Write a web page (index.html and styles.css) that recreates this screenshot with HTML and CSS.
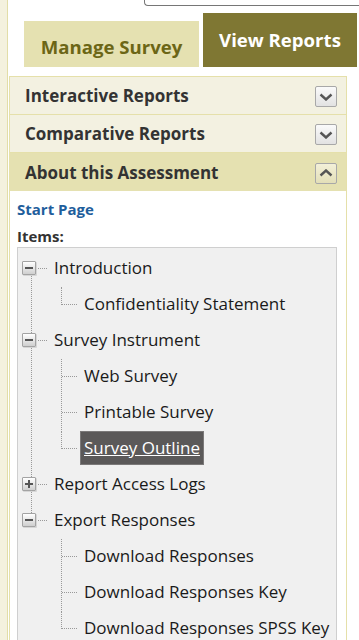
FILE: index.html
```html
<!DOCTYPE html>
<html lang="en">
<head>
    <meta charset="UTF-8">
    <meta name="viewport" content="width=device-width, initial-scale=1.0">
    <title>View Reports</title>
    <link rel="stylesheet" href="styles.css">
</head>
<body>
    <div class="page">
        <div class="edge"></div>
        <div class="main">
            <div class="search"></div>

            <div class="tabs">
                <a class="tab tab--manage">Manage Survey</a>
                <a class="tab tab--view">View Reports</a>
            </div>

            <section class="panel">
                <div class="panel__header">
                    <span>Interactive Reports</span>
                    <span class="chev">
                        <svg width="14" height="8" viewBox="0 0 14 8"><polyline points="1.5,1.5 7,6.5 12.5,1.5" fill="none" stroke="#555" stroke-width="2.4"/></svg>
                    </span>
                </div>
                <div class="panel__header">
                    <span>Comparative Reports</span>
                    <span class="chev">
                        <svg width="14" height="8" viewBox="0 0 14 8"><polyline points="1.5,1.5 7,6.5 12.5,1.5" fill="none" stroke="#555" stroke-width="2.4"/></svg>
                    </span>
                </div>
                <div class="panel__header panel__header--open">
                    <span>About this Assessment</span>
                    <span class="chev">
                        <svg width="14" height="8" viewBox="0 0 14 8"><polyline points="1.5,6.5 7,1.5 12.5,6.5" fill="none" stroke="#555" stroke-width="2.4"/></svg>
                    </span>
                </div>

                <div class="panel__body">
                    <a class="start-link">Start Page</a>
                    <div class="items-title">Items:</div>

                    <div class="tree-box">
                        <ul class="tree">
                            <li class="node">
                                <div class="row"><span class="toggle toggle--minus"></span><span class="hline"></span><span class="label">Introduction</span></div>
                                <ul class="sub">
                                    <li class="last"><div class="row"><span class="hline"></span><span class="label">Confidentiality Statement</span></div></li>
                                </ul>
                            </li>
                            <li class="node">
                                <div class="row"><span class="toggle toggle--minus"></span><span class="hline"></span><span class="label">Survey Instrument</span></div>
                                <ul class="sub">
                                    <li><div class="row"><span class="hline"></span><span class="label">Web Survey</span></div></li>
                                    <li><div class="row"><span class="hline"></span><span class="label">Printable Survey</span></div></li>
                                    <li class="last"><div class="row"><span class="hline"></span><span class="label label--selected">Survey Outline</span></div></li>
                                </ul>
                            </li>
                            <li class="node">
                                <div class="row"><span class="toggle toggle--plus"></span><span class="hline"></span><span class="label">Report Access Logs</span></div>
                            </li>
                            <li class="node last">
                                <div class="row"><span class="toggle toggle--minus"></span><span class="hline"></span><span class="label">Export Responses</span></div>
                                <ul class="sub">
                                    <li><div class="row"><span class="hline"></span><span class="label">Download Responses</span></div></li>
                                    <li><div class="row"><span class="hline"></span><span class="label">Download Responses Key</span></div></li>
                                    <li class="last"><div class="row"><span class="hline"></span><span class="label">Download Responses SPSS Key</span></div></li>
                                </ul>
                            </li>
                        </ul>
                    </div>
                </div>
            </section>
        </div>
    </div>
</body>
</html>
```

FILE: styles.css
```css
* { margin: 0; padding: 0; box-sizing: border-box; }
body {
    font-family: "Open Sans", "Noto Sans", sans-serif;
    color: #222;
    background: #fff;
}
ul{
    list-style: none;
}
.page{
    display: flex;
    height: 100vh;
    overflow: hidden;
}
.edge{
    width: 8px;
    flex-shrink: 0;
    background: #f4f1de;
    border-right: 1px solid #e2dda8;
}
.main{
    flex: 1;
    padding-left: 1px;
}
.search{
    height: 6px;
    margin-left: 135px;
    border: 1px solid #767676;
    border-top: none;
    border-right: none;
    border-bottom-left-radius: 4px;
}

/* tabs */
.tabs{
    display: flex;
    align-items: flex-end;
    gap: 4px;
    margin-top: 7px;
    margin-left: 15px;
    height: 54px;
}
.tab{
    font-weight: 700;
    font-size: 18.6px;
    text-align: center;
    white-space: nowrap;
}
.tab--manage{
    width: 175px;
    height: 46px;
    padding-top: 13px;
    background: #e5e1b1;
    color: #6c6616;
}
.tab--view{
    width: 154px;
    height: 54px;
    padding-top: 14px;
    background: #7f7733;
    color: #fff;
}

/* accordion panel */
.panel{
    width: 338px;
    margin-top: 9px;
    border: 1px solid #e5e0aa;
    border-bottom: none;
    min-height: 600px;
}
.panel__header{
    display: flex;
    align-items: center;
    justify-content: space-between;
    height: 38px;
    padding: 0 9px 0 15px;
    background: #f3f1e1;
    border-bottom: 1px solid #e5e0aa;
    font-size: 17px;
    font-weight: 700;
    color: #333;
}
.panel__header--open{
    background: #e5e1b1;
    border-bottom: none;
}
.chev{
    width: 22px;
    height: 21px;
    display: flex;
    align-items: center;
    justify-content: center;
    border: 1px solid #a8a8a8;
    border-radius: 2px;
    background: linear-gradient(#fafafa, #e2e2e2);
    margin-top: 2px;
}
.panel__header--open .chev{
    background: linear-gradient(#f3f0d8, #e3dfb8);
}
.panel__body{
    padding: 8px 9px 0 7px;
}
.start-link{
    display: block;
    font-size: 15px;
    font-weight: 700;
    color: #1f5e9c;
    line-height: 20px;
}
.items-title{
    margin-top: 7px;
    font-size: 15px;
    font-weight: 700;
    color: #333;
    line-height: 20px;
}

/* tree */
.tree-box{
    margin-top: 1px;
    background: #f0f0f0;
    border: 1px solid #cfcfcf;
    border-bottom: none;
    padding-top: 2px;
    min-height: 420px;
}
.tree li{
    position: relative;
}
.row{
    display: flex;
    align-items: center;
    height: 36px;
    font-size: 17px;
    white-space: nowrap;
}
.node::before{
    content: '';
    position: absolute;
    left: 13px;
    top: 25px;
    bottom: -11px;
    border-left: 1px dotted #999;
}
.node.last::before{
    display: none;
}
.toggle{
    position: relative;
    width: 14px;
    height: 14px;
    margin-left: 4px;
    border: 1px solid #a3a3a3;
    border-radius: 1px;
    background: linear-gradient(#ffffff, #cfcfcf);
    box-shadow: 1px 1px 0 #d6d6d6;
    z-index: 1;
}
.toggle::before{
    content: '';
    position: absolute;
    left: 2px;
    top: 5px;
    width: 8px;
    height: 2px;
    background: #555;
}
.toggle--plus::after{
    content: '';
    position: absolute;
    left: 5px;
    top: 2px;
    width: 2px;
    height: 8px;
    background: #555;
}
.hline{
    width: 9px;
    margin-left: 2px;
    border-top: 1px dotted #999;
}
.label{
    margin-left: 3px;
    padding: 0 3px;
    border: 1px solid transparent;
    line-height: 32px;
    color: #1a1a1a;
}
.label--selected{
    background: #5b5959;
    border-color: #7b7979;
    color: #fff;
    text-decoration: underline;
}
.sub li::before{
    content: '';
    position: absolute;
    left: 43px;
    top: 1px;
    bottom: 0;
    border-left: 1px dotted #999;
}
.sub li.last::before{
    bottom: auto;
    height: 18px;
}
.sub .hline{
    width: 15px;
    margin-left: 44px;
}
```
